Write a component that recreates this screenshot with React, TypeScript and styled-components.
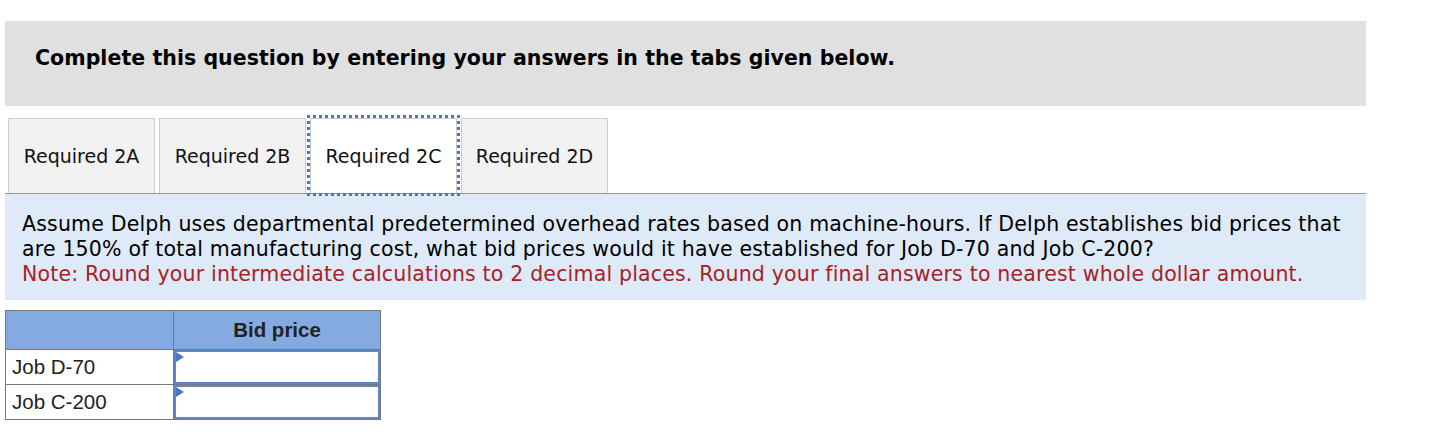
import React from 'react';
import styled, { createGlobalStyle } from 'styled-components';

const GlobalStyle = createGlobalStyle`
  body {
    margin: 0;
    background: #fff;
    font-family: "DejaVu Sans", Verdana, sans-serif;
  }
`

const Page = styled.div`
  width: 1361px;
  padding: 21px 0 0 5px;
`
const Banner = styled.div`
  height: 85px;
  box-sizing: border-box;
  background: #e0e0e0;
  display: flex;
  align-items: center;
  padding: 0 0 12px 30px;
  font-weight: bold;
  font-size: 20.5px;
  letter-spacing: 0.05px;
  color: #000;
`
const TabBar = styled.div`
  display: flex;
  gap: 4px;
  margin-top: 12px;
  padding-left: 3px;
  border-bottom: 1px solid #999;
`
const Tab = styled.div<{ $active?: boolean }>`
  width: 147px;
  height: 75px;
  box-sizing: border-box;
  display: flex;
  align-items: center;
  justify-content: center;
  font-size: 19px;
  color: #111;
  background: ${p => (p.$active ? '#fff' : '#f2f2f2')};
  border: 1px solid #ccc;
  border-bottom: none;
  outline: ${p => (p.$active ? '3px dotted #4a78c2' : 'none')};
  outline-offset: 0px;
`
const Info = styled.div`
  background: #deeaf7;
  padding: 18px 14px 13px 17px;
  font-size: 20.5px;
  letter-spacing: 0.18px;
  line-height: 25px;
  color: #000;
`
const Note = styled.div`
  color: #a8221f;
`
const Table = styled.table`
  margin-top: 10px;
  border-collapse: collapse;
  font-family: "Liberation Sans", Arial, sans-serif;
  font-size: 20.5px;
  color: #222;
`
const HeadCell = styled.th<{ $w: number }>`
  width: ${p => p.$w}px;
  height: 39px;
  background: #84aadf;
  border: 1px solid #777;
  font-weight: bold;
  padding: 0;
  text-align: center;
  vertical-align: top;
  padding-top: 7px;
  box-sizing: border-box;
`
const LabelCell = styled.td`
  height: 34px;
  border: 1px solid #777;
  padding: 0 6px;
`
const InputCell = styled.td`
  border: 1px solid #777;
  padding: 0;
  position: relative;
  background: #5b86c9;
`
const Input = styled.input`
  display: block;
  width: 100%;
  height: 34px;
  box-sizing: border-box;
  border: 2px solid #5b86c9;
  outline: none;
  background: #fff;
  margin: 0;
`
const Flag = styled.span`
  position: absolute;
  left: 2px;
  top: 2px;
  width: 0;
  height: 0;
  border-top: 5px solid transparent;
  border-bottom: 5px solid transparent;
  border-left: 8px solid #4a78c2;
`

const tabs = ['Required 2A', 'Required 2B', 'Required 2C', 'Required 2D']
const jobs = ['Job D-70', 'Job C-200']

export default function App() {
  return (
    <Page>
      <GlobalStyle />
      <Banner>Complete this question by entering your answers in the tabs given below.</Banner>
      <TabBar>
        {tabs.map(t => (
          <Tab key={t} $active={t === 'Required 2C'}>{t}</Tab>
        ))}
      </TabBar>
      <Info>
        Assume Delph uses departmental predetermined overhead rates based on machine-hours. If Delph establishes bid prices that are 150% of total manufacturing cost, what bid prices would it have established for Job D-70 and Job C-200?
        <Note>Note: Round your intermediate calculations to 2 decimal places. Round your final answers to nearest whole dollar amount.</Note>
      </Info>
      <Table>
        <thead>
          <tr>
            <HeadCell $w={168}></HeadCell>
            <HeadCell $w={207}>Bid price</HeadCell>
          </tr>
        </thead>
        <tbody>
          {jobs.map(j => (
            <tr key={j}>
              <LabelCell>{j}</LabelCell>
              <InputCell>
                <Input type="text" />
                <Flag />
              </InputCell>
            </tr>
          ))}
        </tbody>
      </Table>
    </Page>
  )
}
